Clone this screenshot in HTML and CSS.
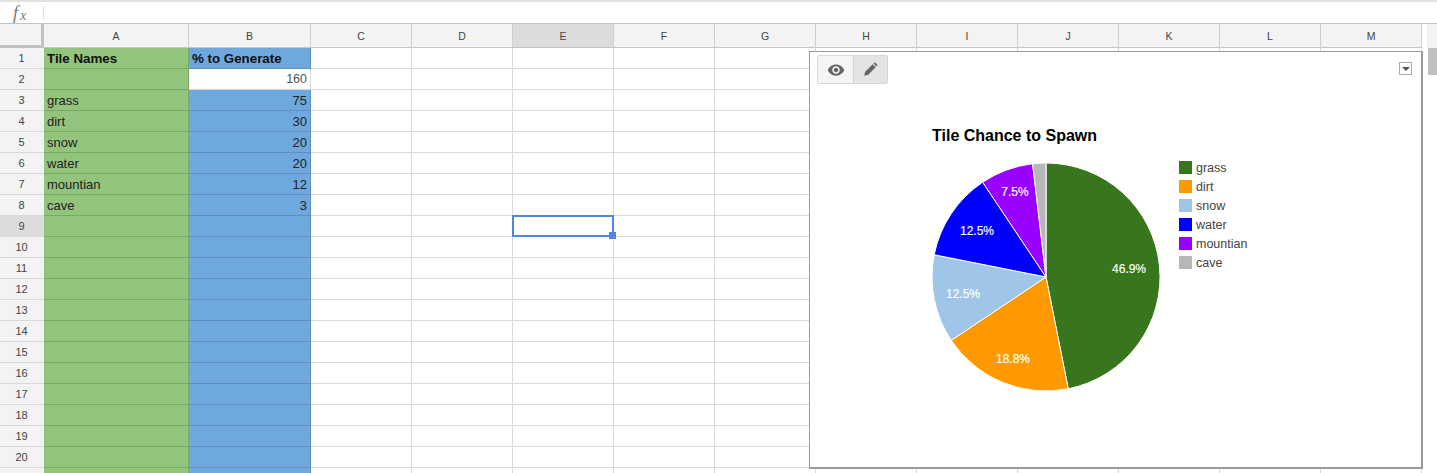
FILE: index.html
```html
<!DOCTYPE html>
<html lang="en">
<head>
<meta charset="utf-8">
<title>Tile Chance to Spawn</title>
<link rel="stylesheet" href="styles.css">
</head>
<body>
<div class="formula-bar">
  <div class="fx"><span class="fx-f">f</span><span class="fx-x">x</span></div>
  <div class="formula-sep"></div>
</div>
<div class="sheet">
  <table class="grid">
    <colgroup><col class="c-h"><col class="c-a"><col class="c-b"><col class="c-n"><col class="c-n"><col class="c-n"><col class="c-n"><col class="c-n"><col class="c-n"><col class="c-n"><col class="c-n"><col class="c-n"><col class="c-n"><col class="c-n"></colgroup>
    <thead>
      <tr><th class="corner"></th><th>A</th><th>B</th><th>C</th><th>D</th><th class="active">E</th><th>F</th><th>G</th><th>H</th><th>I</th><th>J</th><th>K</th><th>L</th><th>M</th></tr>
    </thead>
    <tbody>
      <tr><th>1</th><td class="green bold">Tile Names</td><td class="blue bold">% to Generate</td><td></td><td></td><td></td><td></td><td></td><td></td><td></td><td></td><td></td><td></td><td></td></tr>
      <tr><th>2</th><td class="green"></td><td class="num grey">160</td><td></td><td></td><td></td><td></td><td></td><td></td><td></td><td></td><td></td><td></td><td></td></tr>
      <tr><th>3</th><td class="green">grass</td><td class="blue num">75</td><td></td><td></td><td></td><td></td><td></td><td></td><td></td><td></td><td></td><td></td><td></td></tr>
      <tr><th>4</th><td class="green">dirt</td><td class="blue num">30</td><td></td><td></td><td></td><td></td><td></td><td></td><td></td><td></td><td></td><td></td><td></td></tr>
      <tr><th>5</th><td class="green">snow</td><td class="blue num">20</td><td></td><td></td><td></td><td></td><td></td><td></td><td></td><td></td><td></td><td></td><td></td></tr>
      <tr><th>6</th><td class="green">water</td><td class="blue num">20</td><td></td><td></td><td></td><td></td><td></td><td></td><td></td><td></td><td></td><td></td><td></td></tr>
      <tr><th>7</th><td class="green">mountian</td><td class="blue num">12</td><td></td><td></td><td></td><td></td><td></td><td></td><td></td><td></td><td></td><td></td><td></td></tr>
      <tr><th>8</th><td class="green">cave</td><td class="blue num">3</td><td></td><td></td><td></td><td></td><td></td><td></td><td></td><td></td><td></td><td></td><td></td></tr>
      <tr><th class="active">9</th><td class="green"></td><td class="blue"></td><td></td><td></td><td class="selected"></td><td></td><td></td><td></td><td></td><td></td><td></td><td></td><td></td></tr>
      <tr><th>10</th><td class="green"></td><td class="blue"></td><td></td><td></td><td></td><td></td><td></td><td></td><td></td><td></td><td></td><td></td><td></td></tr>
      <tr><th>11</th><td class="green"></td><td class="blue"></td><td></td><td></td><td></td><td></td><td></td><td></td><td></td><td></td><td></td><td></td><td></td></tr>
      <tr><th>12</th><td class="green"></td><td class="blue"></td><td></td><td></td><td></td><td></td><td></td><td></td><td></td><td></td><td></td><td></td><td></td></tr>
      <tr><th>13</th><td class="green"></td><td class="blue"></td><td></td><td></td><td></td><td></td><td></td><td></td><td></td><td></td><td></td><td></td><td></td></tr>
      <tr><th>14</th><td class="green"></td><td class="blue"></td><td></td><td></td><td></td><td></td><td></td><td></td><td></td><td></td><td></td><td></td><td></td></tr>
      <tr><th>15</th><td class="green"></td><td class="blue"></td><td></td><td></td><td></td><td></td><td></td><td></td><td></td><td></td><td></td><td></td><td></td></tr>
      <tr><th>16</th><td class="green"></td><td class="blue"></td><td></td><td></td><td></td><td></td><td></td><td></td><td></td><td></td><td></td><td></td><td></td></tr>
      <tr><th>17</th><td class="green"></td><td class="blue"></td><td></td><td></td><td></td><td></td><td></td><td></td><td></td><td></td><td></td><td></td><td></td></tr>
      <tr><th>18</th><td class="green"></td><td class="blue"></td><td></td><td></td><td></td><td></td><td></td><td></td><td></td><td></td><td></td><td></td><td></td></tr>
      <tr><th>19</th><td class="green"></td><td class="blue"></td><td></td><td></td><td></td><td></td><td></td><td></td><td></td><td></td><td></td><td></td><td></td></tr>
      <tr><th>20</th><td class="green"></td><td class="blue"></td><td></td><td></td><td></td><td></td><td></td><td></td><td></td><td></td><td></td><td></td><td></td></tr>
      <tr><th></th><td class="green"></td><td class="blue"></td><td></td><td></td><td></td><td></td><td></td><td></td><td></td><td></td><td></td><td></td><td></td></tr>
    </tbody>
  </table>
  <div class="scrollbar"><div class="scroll-head"></div><div class="scroll-thumb"></div></div>

  <section class="chart">
    <div class="chart-top">
      <div class="toolbar">
        <div class="tool">
          <svg class="eye-icon" viewBox="0 0 24 24"><path d="M12 4.5C7 4.5 2.73 7.61 1 12c1.73 4.39 6 7.5 11 7.5s9.27-3.11 11-7.5c-1.73-4.39-6-7.5-11-7.5zM12 17c-2.76 0-5-2.24-5-5s2.24-5 5-5 5 2.24 5 5-2.24 5-5 5zm0-8c-1.66 0-3 1.34-3 3s1.34 3 3 3 3-1.34 3-3-1.34-3-3-3z"/></svg>
        </div>
        <div class="tool pressed">
          <svg class="pencil-icon" viewBox="0 0 24 24"><path d="M2 22l1.2-6L15.5 3.7l4.8 4.8L8 20.8zM16.8 2.4l.9-.9c.7-.7 1.7-.7 2.4 0l2.4 2.4c.7.7.7 1.7 0 2.4l-.9.9z"/></svg>
        </div>
      </div>
      <div class="chart-menu"><span class="chart-menu-arrow"></span></div>
    </div>
    <h2 class="chart-title">Tile Chance to Spawn</h2>
    <div class="chart-body">
      <svg class="pie" viewBox="-115 -115 230 230">
        <g stroke="#fff" stroke-width="1">
          <path fill="#38761d" d="M0 0V-114A114 114 0 0 1 22.24 111.81Z"/>
          <path fill="#ff9900" d="M0 0L22.24 111.81A114 114 0 0 1 -94.79 63.33Z"/>
          <path fill="#9fc5e8" d="M0 0L-94.79 63.33A114 114 0 0 1 -111.81 -22.24Z"/>
          <path fill="#0000ff" d="M0 0L-111.81 -22.24A114 114 0 0 1 -63.33 -94.79Z"/>
          <path fill="#9900ff" d="M0 0L-63.33 -94.79A114 114 0 0 1 -13.4 -113.21Z"/>
          <path fill="#b7b7b7" d="M0 0L-13.4 -113.21A114 114 0 0 1 0 -114Z"/>
        </g>
        <g class="pie-labels">
          <text x="83" y="-4">46.9%</text>
          <text x="-33" y="86">18.8%</text>
          <text x="-83" y="21">12.5%</text>
          <text x="-69" y="-42">12.5%</text>
          <text x="-31" y="-81">7.5%</text>
        </g>
      </svg>
      <ul class="legend">
        <li><span class="swatch s-grass"></span>grass</li>
        <li><span class="swatch s-dirt"></span>dirt</li>
        <li><span class="swatch s-snow"></span>snow</li>
        <li><span class="swatch s-water"></span>water</li>
        <li><span class="swatch s-mountain"></span>mountian</li>
        <li><span class="swatch s-cave"></span>cave</li>
      </ul>
    </div>
  </section>
</div>
</body>
</html>
```

FILE: styles.css
```css
* { box-sizing: border-box; }
html, body { margin: 0; padding: 0; }
body {
  width: 1437px;
  height: 473px;
  overflow: hidden;
  background: #fff;
  font-family: "Liberation Sans", Arial, sans-serif;
  color: #222;
}

.formula-bar {
  height: 24px;
  border-top: 2px solid #e2e2e2;
  border-bottom: 1px solid #c4c4c4;
  display: flex;
  align-items: center;
}
.fx {
  width: 43px;
  padding-left: 13px;
  font-family: "Liberation Serif", serif;
  font-style: italic;
  color: #777;
  line-height: 1;
}
.fx-f { font-size: 18px; }
.fx-x { font-size: 14px; margin-left: 2px; position: relative; top: 1px; }
.formula-sep { width: 1px; height: 13px; background: #ddd; }

.sheet { position: relative; display: flex; height: 449px; overflow: hidden; }

.grid {
  border-collapse: separate;
  border-spacing: 0;
  table-layout: fixed;
  width: 1422px;
  flex: none;
  align-self: flex-start;
}
.c-h { width: 44px; }
.c-a { width: 145px; }
.c-b { width: 122px; }
.c-n { width: 101px; }

.grid th, .grid td {
  height: 21px;
  padding: 0;
  border-right: 1px solid #d9d9d9;
  border-bottom: 1px solid #d9d9d9;
  overflow: hidden;
  white-space: nowrap;
}
.grid thead th {
  height: 24px;
  background: #f3f3f3;
  border-right-color: #cfcfcf;
  border-bottom-color: #c4c4c4;
  font-weight: 400;
  font-size: 10.5px;
  color: #444;
  text-align: center;
}
.grid thead th.corner {
  background: #f3f3f3;
  border-right: 3px solid #c2c2c2;
  border-bottom: 3px solid #c2c2c2;
}
.grid tbody th {
  background: #f3f3f3;
  border-right-color: #f3f3f3;
  font-weight: 400;
  font-size: 11px;
  color: #444;
  text-align: center;
}
.grid th.active, .grid thead th.active, .grid tbody th.active { background: #dcdcdc; }
.grid tbody th.active { border-right-color: #dcdcdc; }

.grid td {
  font-size: 13px;
  padding: 0 3px;
  color: #222;
}
.grid td.green { background: #93c47d; border-color: #7aa868; }
.grid td.blue { background: #6fa8dc; border-color: #5f8fbc; }
.grid td.bold { font-size: 13.33px; font-weight: 700; color: #111; }
.grid td.num { text-align: right; }
.grid td.grey { color: #555; font-size: 12.5px; }

.grid td.selected { position: relative; overflow: visible; }
.grid td.selected::before {
  content: "";
  position: absolute;
  left: -1px; top: -1px; right: -1px; bottom: -1px;
  border: 2px solid #4d86dc;
}
.grid td.selected::after {
  content: "";
  position: absolute;
  right: -4px; bottom: -4px;
  width: 7px; height: 7px;
  background: #4d86dc;
  border-bottom: 1px solid #fff;
  border-right: 1px solid #fff;
}

.scrollbar { flex: 1; background: #fff; display: flex; flex-direction: column; align-items: flex-end; border-left: 5px solid #fff; }
.scroll-head { width: 100%; height: 24px; background: #f3f3f3; }
.scroll-thumb { width: 9px; height: 27px; background: #c0c0c0; }

.chart {
  position: absolute;
  left: 809px;
  top: 27px;
  width: 614px;
  height: 418px;
  background: #fff;
  border: 2px solid #9a9a9a;
  border-width: 1px 2px 2px 1px;
  padding: 3px 9px 0 7px;
}
.chart-top { display: flex; justify-content: space-between; align-items: flex-start; }
.toolbar { display: flex; height: 29px; border: 1px solid #d6d6d6; border-radius: 2px; }
.tool { width: 35px; background: #f5f5f5; display: flex; align-items: center; justify-content: center; }
.tool.pressed { width: 34px; background: #e4e4e4; border-left: 1px solid #d6d6d6; }
.eye-icon { width: 18px; height: 18px; fill: #666; }
.pencil-icon { width: 15px; height: 15px; fill: #666; }

.chart-menu {
  width: 13px; height: 13px;
  margin-top: 7px;
  border: 1px solid #aaa;
  display: flex; align-items: center; justify-content: center;
}
.chart-menu-arrow {
  width: 0; height: 0;
  border-left: 4px solid transparent;
  border-right: 4px solid transparent;
  border-top: 4px solid #555;
}

.chart-title {
  margin: 42px 0 0 115px;
  font-size: 16px;
  line-height: 20px;
  font-weight: 700;
  color: #000;
}
.chart-body { display: flex; align-items: flex-start; margin: 16px 0 0 114px; }
.pie { width: 230px; height: 230px; flex: none; }
.pie-labels text {
  fill: #fff;
  stroke: #fff;
  stroke-width: 0.15;
  font-size: 12px;
  font-weight: 400;
  text-anchor: middle;
  font-family: "Liberation Sans", Arial, sans-serif;
}
.legend { list-style: none; margin: -4px 0 0 18px; padding: 0; }
.legend li {
  display: flex;
  align-items: center;
  gap: 4px;
  height: 19px;
  font-size: 12.5px;
  color: #444;
}
.swatch { width: 13px; height: 13px; flex: none; }
.s-grass { background: #38761d; }
.s-dirt { background: #ff9900; }
.s-snow { background: #9fc5e8; }
.s-water { background: #0000ff; }
.s-mountain { background: #9900ff; }
.s-cave { background: #b7b7b7; }
```
